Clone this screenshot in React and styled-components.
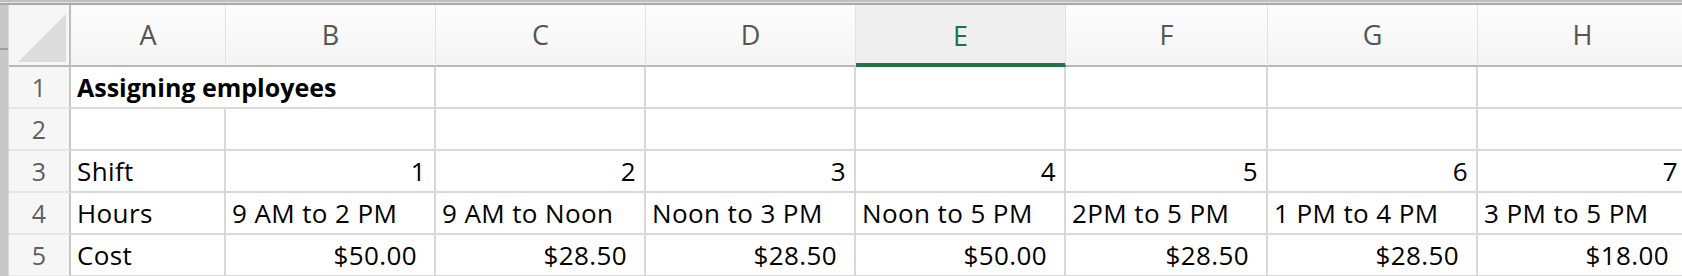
import styled, { createGlobalStyle, css } from 'styled-components'

const GlobalStyle = createGlobalStyle`
  html, body {
    margin: 0;
    padding: 0;
    background: #ffffff;
  }
  body {
    font-family: 'Open Sans', Lato, sans-serif;
    overflow: hidden;
  }
`

const columns = [
  { key: 'A', width: 155 },
  { key: 'B', width: 210 },
  { key: 'C', width: 210 },
  { key: 'D', width: 210 },
  { key: 'E', width: 210, active: true },
  { key: 'F', width: 202 },
  { key: 'G', width: 210 },
  { key: 'H', width: 210 },
]

const money = (v) => ({ text: v, align: 'right', pad: 17 })
const num = (v) => ({ text: String(v), align: 'right', pad: 8 })

const rows = [
  [{ text: 'Assigning employees', bold: true, span: 2 }, null, {}, {}, {}, {}, {}, {}],
  [{}, {}, {}, {}, {}, {}, {}, {}],
  [{ text: 'Shift' }, num(1), num(2), num(3), num(4), num(5), num(6), num(7)],
  [
    { text: 'Hours' },
    { text: '9 AM to 2 PM' },
    { text: '9 AM to Noon' },
    { text: 'Noon to 3 PM' },
    { text: 'Noon to 5 PM' },
    { text: '2PM to 5 PM' },
    { text: '1 PM to 4 PM' },
    { text: '3 PM to 5 PM' },
  ],
  [
    { text: 'Cost' },
    money('$50.00'),
    money('$28.50'),
    money('$28.50'),
    money('$50.00'),
    money('$28.50'),
    money('$28.50'),
    money('$18.00'),
  ],
]

const App = () => {
  const template = `62px ${columns.map((c) => c.width + 'px').join(' ')}`
  return (
    <>
      <GlobalStyle />
      <Window>
        <TopFrame />
        <Body>
          <SideFrame />
          <Sheet style={{ gridTemplateColumns: template }}>
            <Corner>
              <svg width="60" height="60" viewBox="0 0 60 60">
                <polygon points="9,57 57,57 57,9" fill="#dcdcdc" />
              </svg>
            </Corner>
            {columns.map((c) => (
              <ColHeader key={c.key} $active={c.active}>
                {c.key}
              </ColHeader>
            ))}
            {rows.map((row, r) => (
              <Row key={r}>
                <RowHeader>{r + 1}</RowHeader>
                {row.map((cell, i) =>
                  cell === null ? null : (
                    <Cell
                      key={i}
                      $span={cell.span}
                      $bold={cell.bold}
                      $align={cell.align}
                      $pad={cell.pad}
                    >
                      {cell.text}
                    </Cell>
                  )
                )}
              </Row>
            ))}
          </Sheet>
        </Body>
      </Window>
    </>
  )
}

const Window = styled.div`
  width: 1682px;
  height: 276px;
  overflow: hidden;
  display: flex;
  flex-direction: column;
`

const TopFrame = styled.div`
  height: 5px;
  flex: none;
  background: linear-gradient(
    to bottom,
    #bfbfbf 0,
    #bfbfbf 2px,
    #e4e4e4 2px,
    #e4e4e4 3px,
    #a8a8a8 3px,
    #a8a8a8 5px
  );
`

const Body = styled.div`
  display: flex;
  flex: 1;
  min-height: 0;
`

const SideFrame = styled.div`
  width: 9px;
  flex: none;
  background: linear-gradient(
    to bottom,
    #c8c8c8 0,
    #c8c8c8 43px,
    #9e9e9e 43px,
    #9e9e9e 45px,
    #c8c8c8 45px
  );
  border-right: 1px solid #d9d9d9;
  box-sizing: border-box;
`

const Sheet = styled.div`
  display: grid;
  grid-auto-rows: 42px;
  grid-template-rows: 62px;
  flex: none;
`

const Row = styled.div`
  display: contents;
`

const Corner = styled.div`
  box-sizing: border-box;
  background: #f6f6f6;
  border-right: 2px solid #bdbdbd;
  border-bottom: 2px solid #b8b8b8;
  display: flex;
  align-items: flex-start;
  svg {
    display: block;
  }
`

const ColHeader = styled.div`
  box-sizing: border-box;
  background: linear-gradient(to bottom, #fdfdfd, #f4f4f4);
  border-right: 1px solid #e2e2e2;
  border-bottom: 2px solid #b8b8b8;
  color: #555555;
  font-size: 27px;
  line-height: 60px;
  text-align: center;
  ${(p) =>
    p.$active &&
    css`
      background: #efefef;
      color: #217346;
      border-bottom: 4px solid #217346;
      line-height: 58px;
      padding-top: 2px;
    `}
`

const RowHeader = styled.div`
  box-sizing: border-box;
  background: #f6f6f6;
  border-right: 2px solid #c6c6c6;
  border-bottom: 2px solid #e6e6e6;
  color: #5f5f5f;
  font-size: 25px;
  line-height: 40px;
  text-align: center;
`

const Cell = styled.div`
  box-sizing: border-box;
  border-right: 2px solid #d8d8d8;
  border-bottom: 2px solid #d8d8d8;
  color: #000000;
  font-size: ${(p) => (p.$bold ? '25px' : '26px')};
  line-height: 40px;
  letter-spacing: ${(p) => (p.$bold ? '0' : '0.4px')};
  white-space: nowrap;
  overflow: hidden;
  padding: 0 ${(p) => (p.$align === 'right' ? `${p.$pad}px 0 0` : '0 0 6px')};
  text-align: ${(p) => p.$align || 'left'};
  font-weight: ${(p) => (p.$bold ? 700 : 400)};
  grid-column: ${(p) => (p.$span ? `span ${p.$span}` : 'auto')};
`

export default App
